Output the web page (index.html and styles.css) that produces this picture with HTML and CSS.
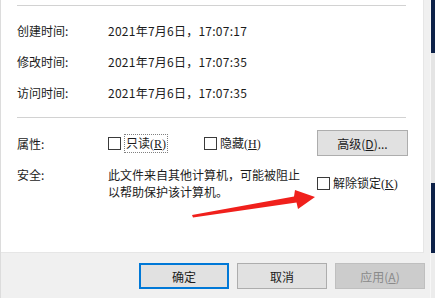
FILE: index.html
```html
<!DOCTYPE html>
<html lang="zh-CN">
<head>
<meta charset="utf-8">
<title>属性</title>
<link rel="stylesheet" href="styles.css">
</head>
<body>
<div class="screen">
  <div class="dialog">
    <div class="panel">
      <div class="rule"></div>
      <div class="times">
        <div class="row"><span class="label">创建时间:</span><span class="value">2021年7月6日，17:07:17</span></div>
        <div class="row"><span class="label">修改时间:</span><span class="value">2021年7月6日，17:07:35</span></div>
        <div class="row"><span class="label">访问时间:</span><span class="value">2021年7月6日，17:07:35</span></div>
      </div>
      <div class="rule"></div>
      <div class="row attr">
        <span class="label">属性:</span>
        <div class="attr-controls">
          <label class="check"><span class="box"></span><span class="focus-text">只读<span class="acc">(<u>R</u>)</span></span></label>
          <label class="check hidden-opt"><span class="box"></span><span>隐藏<span class="acc">(<u>H</u>)</span></span></label>
          <button class="btn adv">高级(<u>D</u>)...</button>
        </div>
      </div>
      <div class="row security">
        <span class="label sec-label">安全:</span>
        <p class="sec-text">此文件来自其他计算机，可能被阻止<br>以帮助保护该计算机。</p>
        <label class="check"><span class="box"></span><span>解除锁定<span class="acc">(<u>K</u>)</span></span></label>
      </div>
    </div>
    <div class="actions">
      <button class="btn default">确定</button>
      <button class="btn">取消</button>
      <button class="btn disabled">应用(<u>A</u>)</button>
    </div>
  </div>
  <div class="desktop">
    <div class="d-dark d-top"></div>
    <div class="d-light d-mid"></div>
    <div class="d-dark d-low"></div>
    <div class="d-light d-bottom"></div>
  </div>
  <svg class="arrow" width="435" height="298" viewBox="0 0 435 298" aria-hidden="true">
    <polygon points="192,215 294,196.5 295,190 315,197 298,209 296.5,202.5 193,217.5" fill="#f0201c"/>
  </svg>
</div>
</body>
</html>
```
FILE: styles.css
```css
html, body {
  margin: 0;
  padding: 0;
}
body {
  width: 435px;
  height: 298px;
  overflow: hidden;
  background: #f0f0f0;
  font: 12px/17px "Noto Sans CJK SC", "Microsoft YaHei", sans-serif;
  color: #1b1b1b;
}
.screen {
  position: relative;
  display: flex;
  width: 435px;
  height: 298px;
}
.dialog {
  width: 430px;
  flex: none;
  background: #f0f0f0;
  border-left: 1px solid #dcdcdc;
  box-sizing: border-box;
}
.panel {
  width: 423px;
  height: 253px;
  box-sizing: border-box;
  padding: 5px 17px 0 16px;
  background: #fff;
  border-right: 1px solid #e6e6e6;
  border-bottom: 1px solid #e6e6e6;
}
.rule {
  height: 1px;
  background: #d2d2d2;
}
.times {
  display: flex;
  flex-direction: column;
  gap: 14px;
  padding: 16px 0;
}
.row {
  display: flex;
  align-items: center;
}
.label {
  width: 91px;
  flex: none;
}
.value {
  letter-spacing: 0.25px;
}
.attr {
  margin-top: 12px;
  height: 26px;
}
.attr-controls {
  display: flex;
  align-items: center;
  flex: 1;
}
.check {
  display: flex;
  align-items: center;
  gap: 3px;
  white-space: nowrap;
}
.box {
  width: 13px;
  height: 13px;
  box-sizing: border-box;
  border: 1px solid #3a3a3a;
  background: #fff;
  flex: none;
}
.focus-text {
  border: 1px dotted #808080;
  padding: 0 1px;
  line-height: 15px;
}
.acc {
  font-family: "Liberation Serif", serif;
}
.hidden-opt {
  margin-left: 36px;
}
.btn {
  font: 12px/17px "Noto Sans CJK SC", "Microsoft YaHei", sans-serif;
  color: #1b1b1b;
  background: #e1e1e1;
  border: 1px solid #adadad;
  width: 90px;
  height: 26px;
  padding: 0;
  box-sizing: border-box;
}
.adv {
  margin-left: auto;
  width: 91px;
  margin-right: -2px;
}
.security {
  margin-top: 10px;
}
.sec-label {
  align-self: flex-start;
}
.sec-text {
  margin: 0;
  width: 209px;
  flex: none;
}
.actions {
  display: flex;
  justify-content: flex-end;
  gap: 8px;
  padding: 10px 5px 0 0;
}
.btn.default {
  border: 1px solid #0078d7;
  box-shadow: inset 0 0 0 1px #0078d7;
}
.btn.disabled {
  background: #cccccc;
  border-color: #bfbfbf;
  color: #8a8a8a;
}
.desktop {
  width: 5px;
  flex: none;
  display: flex;
  flex-direction: column;
  border-left: 1px solid #f7f7f7;
}
.d-dark { background: #0d2148; }
.d-light { background: #e4e4e4; }
.d-top { height: 53px; }
.d-mid { height: 130px; }
.d-low { height: 70px; }
.d-bottom { flex: 1; background: #ececec; }
.arrow {
  position: absolute;
  left: 0;
  top: 0;
  pointer-events: none;
}
```
